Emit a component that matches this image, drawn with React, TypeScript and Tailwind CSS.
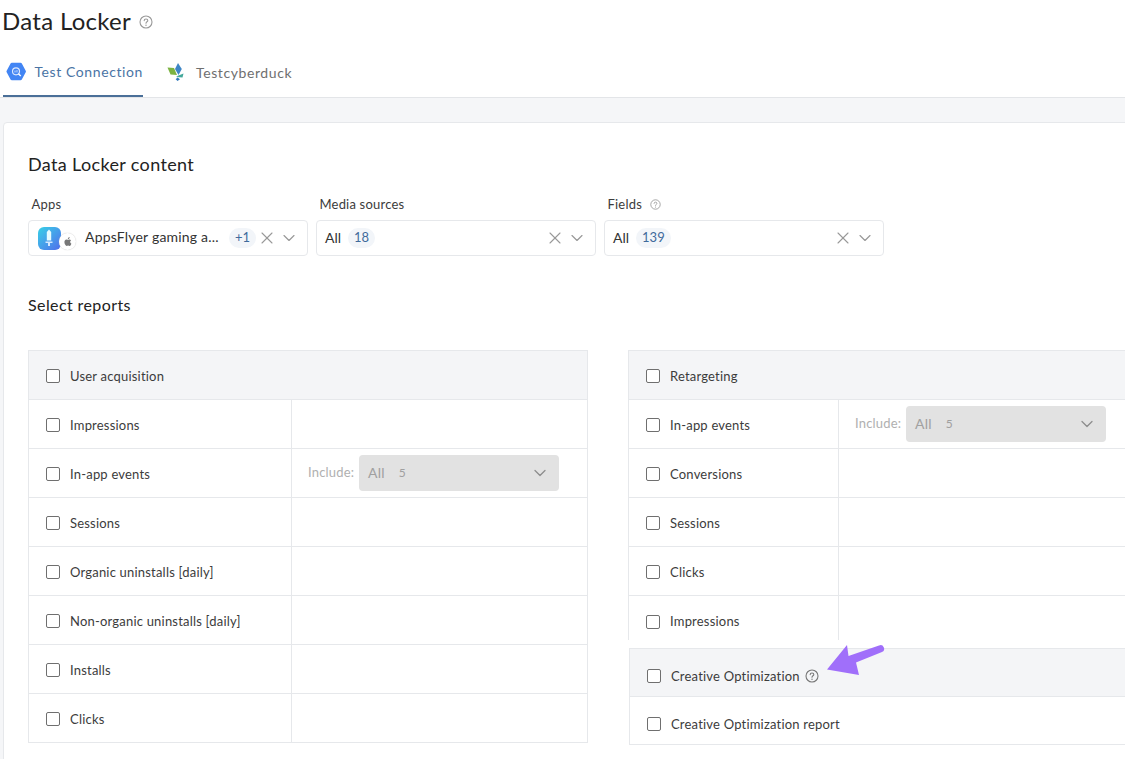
import { ChevronDown, X } from 'lucide-react'

const font = { fontFamily: 'Lato, "Open Sans", sans-serif' }

function HelpIcon({ size = 14, className = '' }: { size?: number; className?: string }) {
  return (
    <svg width={size} height={size} viewBox="0 0 14 14" fill="none" className={className}>
      <circle cx="7" cy="7" r="6" stroke="currentColor" strokeWidth="1.1" />
      <path d="M5.2 5.6c0-1 .8-1.6 1.8-1.6s1.8.6 1.8 1.5c0 1.3-1.8 1.3-1.8 2.7" stroke="currentColor" strokeWidth="1.1" strokeLinecap="round" />
      <circle cx="7" cy="10.2" r=".7" fill="currentColor" />
    </svg>
  )
}

function BigQueryIcon() {
  return (
    <svg width="21" height="21" viewBox="0 0 21 21">
      <path d="M6 1.5h9a1.5 1.5 0 0 1 1.3.8l4 7.4a1.6 1.6 0 0 1 0 1.6l-4 7.4a1.5 1.5 0 0 1-1.3.8H6a1.5 1.5 0 0 1-1.3-.8l-4-7.4a1.6 1.6 0 0 1 0-1.6l4-7.4A1.5 1.5 0 0 1 6 1.5z" fill="#4285f4" />
      <circle cx="10.3" cy="10.3" r="3.6" fill="none" stroke="#dbe7fd" strokeWidth="1.2" />
      <path d="M12.8 12.8l2.4 2.4" stroke="#ffffff" strokeWidth="1.4" />
      <path d="M9.3 9.5v2M11.3 9v2.5" stroke="#dbe7fd" strokeWidth=".9" />
    </svg>
  )
}

function DuckIcon() {
  return (
    <svg width="17" height="18" viewBox="0 0 17 18">
      <path d="M0.5 4.500l6.500.5 3 7-6.500-.5z" fill="#7cb342" />
      <path d="M11 0l3.800 6-3.300 6-3.500-6z" fill="#3d85c6" />
      <path d="M16.500 10.500l-1 4-6.500-.5 2.500-1.500z" fill="#43a89a" />
      <path d="M10.500 14.500l2.500 1.800-2.500 1.700-1.800-1.800z" fill="#2f78bd" />
    </svg>
  )
}

function AppIcon() {
  return (
    <div className="relative h-[23px] w-[38px] shrink-0">
      <div className="h-[23px] w-[23px] overflow-hidden rounded-md bg-gradient-to-br from-[#35d0e6] to-[#4f6bea]">
        <svg width="23" height="23" viewBox="0 0 23 23">
          <path d="M11 2.500l2.200 2.500v8.500H8.800V5z" fill="#e6fbff" />
          <path d="M7.500 14.500h7v1.600h-7zM10 16h2v3h-2z" fill="#d5e9ff" />
        </svg>
      </div>
      <div className="absolute right-0 top-[6px] flex h-[17px] w-[17px] items-center justify-center rounded-full bg-white shadow-[0_0_1px_#bbb]">
        <svg width="10" height="11" viewBox="0 0 10 11" fill="#777">
          <path d="M7.2 5.8c0-1 .8-1.5.9-1.6-.5-.7-1.2-.8-1.5-.8-.6-.1-1.2.4-1.6.4s-.9-.4-1.4-.4c-.7 0-1.4.4-1.8 1-.8 1.3-.2 3.3.5 4.4.4.5.8 1.1 1.4 1.1.5 0 .8-.4 1.4-.4s.9.4 1.4.4c.6 0 1-.5 1.3-1 .4-.6.6-1.2.6-1.2s-1.2-.5-1.2-1.9z" />
          <path d="M6.200 2.600c.3-.4.5-.9.5-1.500-.5 0-1 .3-1.400.7-.3.3-.5.9-.5 1.400.5.100 1-.2 1.400-.6z" />
        </svg>
      </div>
    </div>
  )
}

function Count({ children }: { children: React.ReactNode }) {
  return <span className="flex h-[20px] items-center rounded-full bg-[#f2f5f9] px-[6px] text-[13px] text-[#3f6a9c]">{children}</span>
}

function SelectBox({ label, help, children }: { label: string; help?: boolean; children: React.ReactNode }) {
  return (
    <div className="w-[280px]">
      <div className="mb-[7px] flex h-[17px] items-center gap-[8px] pl-[3.5px] text-[13px] tracking-[0.2px] text-[#3c3c3c]">
        {label}
        {help && <HelpIcon size={11} className="text-[#999]" />}
      </div>
      <div className="flex h-[36px] items-center rounded border border-[#e6e8eb] bg-white pl-[9px] pr-[8px] text-[14px] text-[#333]">
        <div className="flex min-w-0 flex-1 items-center">{children}</div>
        <X size={20} strokeWidth={1.3} className="text-[#999]" />
        <ChevronDown size={20} strokeWidth={1.4} className="ml-[2px] text-[#999]" />
      </div>
    </div>
  )
}

function Check() {
  return <span className="h-[14px] w-[14px] shrink-0 rounded-[2px] border-[1.5px] border-[#6f6f6f] bg-white" />
}

function Label({ children }: { children: React.ReactNode }) {
  return <span className="mt-[2px] whitespace-nowrap">{children}</span>
}

function IncludeSelect() {
  return (
    <div className="flex items-center pl-[16px] text-[13px] tracking-[0.2px] text-[#b0b0b0]">
      <span className="w-[51px]">Include:</span>
      <div className="flex h-[36px] w-[200px] items-center rounded bg-[#e2e2e2] pl-[9px] pr-[9px] text-[#a0a0a0]">
        <span className="-mt-[1px] text-[14px]">All</span>
        <span className="ml-[14px] text-[12px]">5</span>
        <ChevronDown size={20} strokeWidth={1.5} className="ml-auto text-[#8d8d8d]" />
      </div>
    </div>
  )
}

function ReportRow({ name, col, include, last }: { name: string; col: string; include?: boolean; last?: boolean }) {
  return (
    <div className={last ? 'flex h-[48px]' : 'flex h-[49px] border-b border-[#e6e8eb]'}>
      <div className={`${col} flex items-center gap-[10px] border-r border-[#e6e8eb] pl-[17px] pt-[2px] text-[13px] tracking-[0.2px] text-[#3c3c3c]`}>
        <Check />
        <Label>{name}</Label>
      </div>
      <div className="flex flex-1 items-center">{include && <IncludeSelect />}</div>
    </div>
  )
}

function HeaderRow({ name }: { name: string }) {
  return (
    <div className="flex h-[49px] items-center gap-[10px] border-b border-[#e6e8eb] bg-[#f4f5f7] pl-[17px] pt-[2px] text-[13px] tracking-[0.2px] text-[#3c3c3c]">
      <Check />
      <Label>{name}</Label>
    </div>
  )
}

const leftRows = ['Impressions', 'In-app events', 'Sessions', 'Organic uninstalls [daily]', 'Non-organic uninstalls [daily]', 'Installs', 'Clicks']
const rightRows = ['In-app events', 'Conversions', 'Sessions', 'Clicks']

export default function App() {
  return (
    <div style={font} className="flex h-[759px] w-[1125px] flex-col overflow-hidden bg-[#f5f6f8]">
      <div className="h-[98px] shrink-0 border-b border-[#e3e5e8] bg-white pl-[3px]">
        <div className="-ml-[1px] flex h-[41px] items-center gap-[8px] text-[24px] tracking-[0.3px] text-[#222]">
          Data Locker
          <HelpIcon size={14} className="mt-[3px] text-[#999]" />
        </div>
        <div className="mt-[4px] flex h-[52px] gap-[24px] text-[14px]">
          <div className="flex h-[52px] w-[140px] items-center gap-[8px] whitespace-nowrap border-b-2 border-[#4a6f98] pl-[3px] pt-[2px] tracking-[0.6px] text-[#4a74a5]">
            <BigQueryIcon />
            Test Connection
          </div>
          <div className="flex items-center gap-[12px] pt-[2px] tracking-[0.6px] text-[#6f6f6f]">
            <DuckIcon />
            Testcyberduck
          </div>
        </div>
      </div>
      <div className="pl-[3px] pt-[24px]">
        <div className="h-[700px] w-[1200px] rounded border border-[#e6e8eb] bg-white pl-[24px] pt-[29px]">
          <div className="text-[18px] leading-[24px] tracking-[0.35px] text-[#222]">Data Locker content</div>
          <div className="mt-[20px] flex gap-[8px]">
            <SelectBox label="Apps">
              <AppIcon />
              <span className="-mt-[3px] ml-[9px] flex-1 truncate tracking-[0.2px]">AppsFlyer gaming a...</span>
              <span className="mr-[1px]"><Count>+1</Count></span>
            </SelectBox>
            <SelectBox label="Media sources">
              <span className="-ml-[1px] -mt-[1px]">All</span>
              <span className="ml-[7px]"><Count>18</Count></span>
            </SelectBox>
            <SelectBox label="Fields" help>
              <span className="-ml-[1px] -mt-[1px]">All</span>
              <span className="ml-[7px]"><Count>139</Count></span>
            </SelectBox>
          </div>
          <div className="mt-[38px] text-[16px] leading-[22px] tracking-[0.4px] text-[#222]">Select reports</div>
          <div className="mt-[34px] flex gap-[40px]">
            <div className="w-[560px] shrink-0 self-start border border-[#e6e8eb]">
              <HeaderRow name="User acquisition" />
              {leftRows.map((r, i) => (
                <ReportRow key={r} name={r} col="w-[263px]" include={r === 'In-app events'} last={i === leftRows.length - 1} />
              ))}
            </div>
            <div className="w-[560px] shrink-0">
              <div className="border border-b-0 border-[#e6e8eb]">
                <HeaderRow name="Retargeting" />
                {rightRows.map((r) => (
                  <ReportRow key={r} name={r} col="w-[210px]" include={r === 'In-app events'} />
                ))}
                <div className="flex h-[44px]">
                  <div className="flex w-[210px] items-center gap-[10px] border-r border-[#e6e8eb] pl-[17px] pt-[7px] text-[13px] tracking-[0.2px] text-[#3c3c3c]">
                    <Check />
                    Impressions
                  </div>
                </div>
              </div>
              <div className="ml-[1px] mt-[8px] border border-[#e6e8eb]">
                <div className="relative flex h-[48px] items-center gap-[10px] border-b border-[#e6e8eb] bg-[#f4f5f7] pl-[17px] pt-[6px] text-[13px] tracking-[0.2px] text-[#3c3c3c]">
                  <Check />
                  <Label>Creative Optimization</Label>
                  <HelpIcon size={14} className="-ml-[5px] text-[#777]" />
                  <svg width="60" height="34" viewBox="0 0 60 34" className="absolute left-[196px] top-[-5px]">
                    <path d="M1 25.500 21 1l1.500 11L53 1.500a3.500 3.500 0 0 1 3 6.500L30 18.500 33 31z" fill="#a06ffa" />
                  </svg>
                </div>
                <div className="flex h-[47px] items-center gap-[10px] pl-[17px] pt-[6px] text-[13px] tracking-[0.2px] text-[#3c3c3c]">
                  <Check />
                  <Label>Creative Optimization report</Label>
                </div>
              </div>
            </div>
          </div>
        </div>
      </div>
    </div>
  )
}
